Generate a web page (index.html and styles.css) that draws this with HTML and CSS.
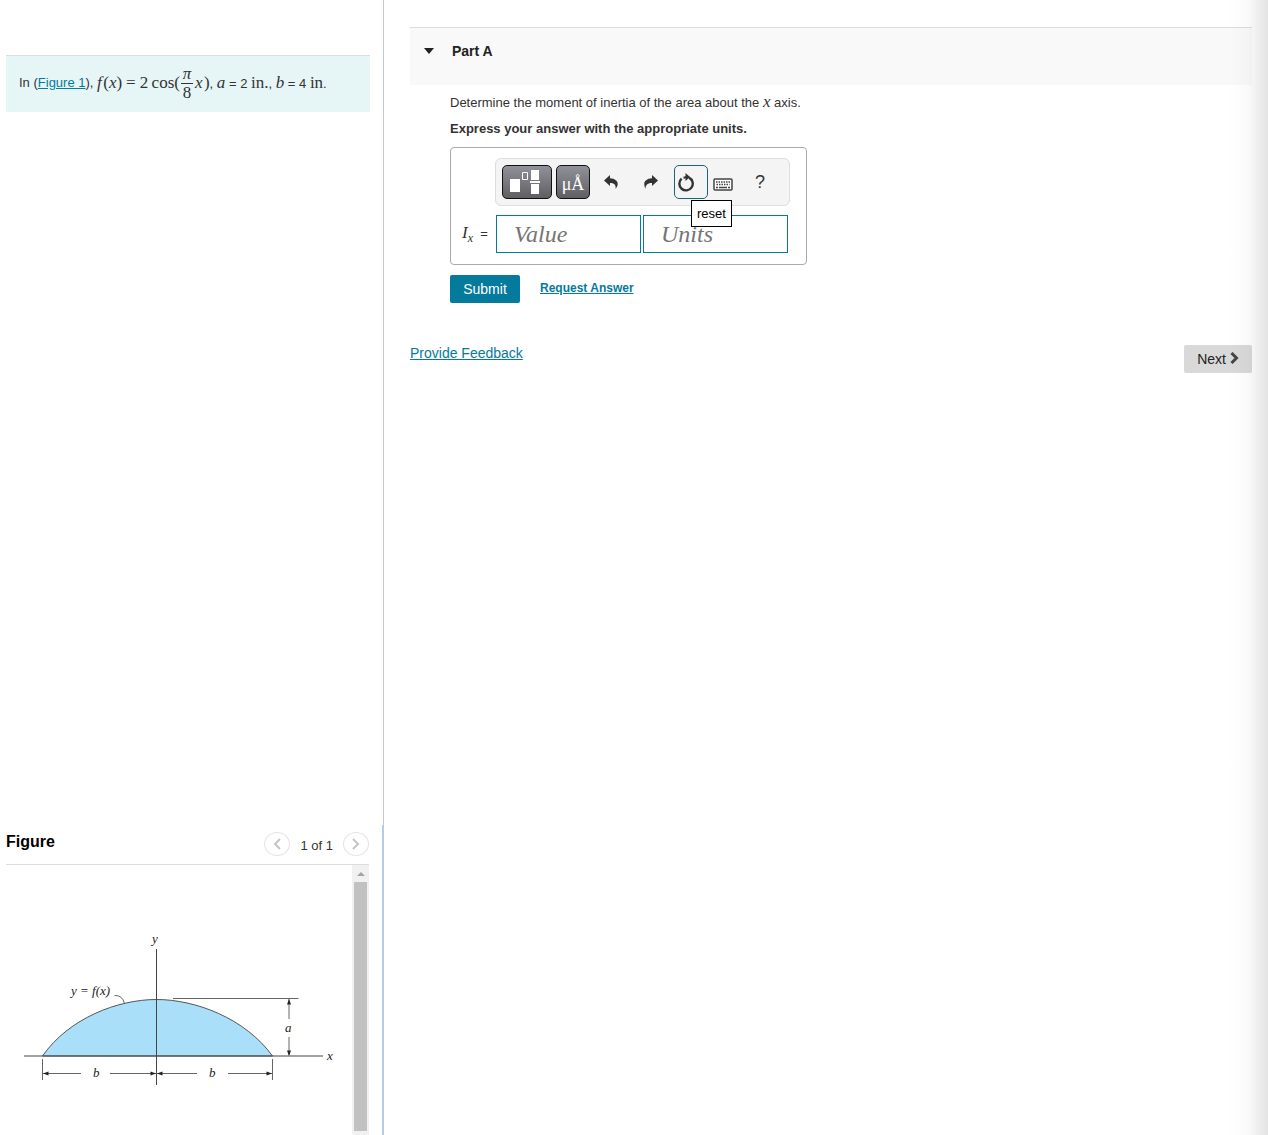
FILE: index.html
```html
<!DOCTYPE html>
<html lang="en">
<head>
    <meta charset="UTF-8">
    <meta name="viewport" content="width=device-width, initial-scale=1.0">
    <title>Part A - Moment of Inertia</title>
    <link rel="stylesheet" href="styles.css">
</head>
<body>
    <div class="page">
        <aside class="left-pane">
            <section class="problem">
                <p class="problem-text">
                    <span>In (<a href="#figure">Figure 1</a>),&nbsp;</span>
                    <span class="math"><i>f</i>&#8202;(<i>x</i>)<span class="equals">=</span>2&#8201;cos(</span>
                    <span class="fraction math"><i>π</i><span class="denominator">8</span></span>
                    <span class="math"><i>x</i>&#8202;)</span>
                    <span>,&nbsp;<i class="math">a</i> = 2 <span class="math">in.</span>, <i class="math">b</i> = 4 <span class="math">in</span>.</span>
                </p>
            </section>
            <section class="figure" id="figure">
                <div class="figure-header">
                    <h2>Figure</h2>
                    <div class="pager">
                        <button type="button" aria-label="Previous figure">
                            <svg width="8" height="12" viewBox="0 0 8 12"><path d="M7 1L2 6l5 5"/></svg>
                        </button>
                        <span>1 of 1</span>
                        <button type="button" aria-label="Next figure">
                            <svg width="8" height="12" viewBox="0 0 8 12"><path d="M1 1l5 5-5 5"/></svg>
                        </button>
                    </div>
                </div>
                <div class="figure-body">
                    <svg class="diagram" width="346" height="270" viewBox="6 865 346 270">
                        <path class="area" d="M42.5 1056C69 1018 118 999.500 156.500 999.500S245 1018 272.500 1056Z"/>
                        <path class="axis" d="M24 1056h299M156.500 949v136"/>
                        <path class="thin" d="M173 998.500h125.500M114.500 995.500q8-.5 10 8M42.500 1059v21M272.500 1059v21"/>
                        <path class="thin" d="M43 1073.500h38M110 1073.500h87M228 1073.500h44M289 999v20M289 1037v18"/>
                        <path class="arrow" d="M43 1073.500l5.500-2v4zM156 1073.500l-5.500-2v4zM157 1073.500l5.500-2v4zM272 1073.500l-5.500-2v4zM289 999l-2 5.500h4zM289 1056l-2-5.500h4z"/>
                        <text x="152" y="943">y</text>
                        <text x="71" y="995">y = f(x)</text>
                        <text x="93" y="1077">b</text>
                        <text x="209" y="1077">b</text>
                        <text x="285" y="1032">a</text>
                        <text x="327" y="1060">x</text>
                    </svg>
                    <div class="scrollbar">
                        <div class="scroll-up"></div>
                        <div class="scroll-thumb"></div>
                    </div>
                </div>
            </section>
        </aside>

        <main class="right-pane">
            <div class="part-header">
                <span class="caret"></span>
                <h1>Part A</h1>
            </div>
            <form class="part-body">
                <p>Determine the moment of inertia of the area about the <i class="math">x</i> axis.</p>
                <p class="instructions">Express your answer with the appropriate units.</p>

                <div class="answer-box">
                    <div class="toolbar">
                        <button type="button" class="dark templates" aria-label="Templates">
                            <svg width="32" height="26" viewBox="0 0 32 26">
                                <path fill="#fff" d="M1 10h10v13H1zM22 1h8v10h-8zM22 15h8v10h-8zM21 12h10v2H21z"/>
                                <path fill="none" stroke="#fff" d="M13.500 3.500h5v7h-5z"/>
                            </svg>
                        </button>
                        <button type="button" class="dark symbols">μÅ</button>
                        <button type="button" class="plain" aria-label="undo">
                            <svg width="14" height="15" viewBox="0 0 14 15"><path fill="#333" d="M0 5.500L6 0v3.200C11 3.500 14 6 13.700 9c-.1 2-1 3.500-2.200 5 .7-3.300-.5-6-5.500-6v3z"/></svg>
                        </button>
                        <button type="button" class="plain redo" aria-label="redo">
                            <svg width="14" height="15" viewBox="0 0 14 15"><path fill="#333" d="M14 5.500L8 0v3.200C3 3.500 0 6 .3 9c.1 2 .5 3.500 1.200 5C1.300 10.700 3 8 8 8v3z"/></svg>
                        </button>
                        <button type="button" class="plain reset" aria-label="reset">
                            <svg width="18" height="19" viewBox="0 0 18 19">
                                <path fill="none" stroke="#333" stroke-width="2.400" d="M12 4.700A6.700 6.700 0 1 1 4.600 5.700"/>
                                <path fill="none" stroke="#333" stroke-width="2" d="M6.500 4.700L10 4"/>
                                <path fill="#333" d="M8.500 0l4.500 4-4.500 4z"/>
                            </svg>
                            <span class="tooltip">reset</span>
                        </button>
                        <button type="button" class="plain keyboard" aria-label="keyboard shortcuts">
                            <svg width="20" height="13" viewBox="0 0 20 13">
                                <rect x="1" y="1" width="18" height="11" rx="1" fill="#fff" stroke="#444" stroke-width="1.500"/>
                                <path stroke="#444" stroke-width="1.500" stroke-dasharray="1.500 1" d="M3 4h14M3.500 6.500h13"/>
                                <path stroke="#444" stroke-width="1.500" d="M3 9.500h2M6 9.500h8M15 9.500h2"/>
                            </svg>
                        </button>
                        <button type="button" class="plain help" aria-label="help">?</button>
                    </div>
                    <div class="answer-row">
                        <label for="value"><i class="math">I<sub>x</sub></i>&nbsp; =</label>
                        <input type="text" id="value" placeholder="Value">
                        <input type="text" id="units" placeholder="Units" aria-label="Units">
                    </div>
                </div>

                <div class="actions">
                    <button type="submit" class="submit">Submit</button>
                    <a href="#answer">Request Answer</a>
                </div>
            </form>
            <div class="footer">
                <a href="#feedback">Provide Feedback</a>
                <button type="button" class="next">Next
                    <svg width="9" height="12" viewBox="0 0 9 12"><path fill="none" stroke="#444" stroke-width="3" d="M1.500 1l5 5-5 5"/></svg>
                </button>
            </div>
        </main>
    </div>
</body>
</html>
```
FILE: styles.css
```css
* {
    box-sizing: border-box;
}

body {
    margin: 0;
    font-family: "Liberation Sans", Arial, sans-serif;
    font-size: 13px;
    line-height: 16px;
    color: #333;
    background-color: #fff;
}

h1, h2, p {
    margin: 0;
}

a {
    color: #047a9c;
}

button {
    font-family: inherit;
    cursor: pointer;
}

.math {
    font-family: "Liberation Serif", "Times New Roman", serif;
    font-size: 17px;
}

.page {
    display: grid;
    grid-template-columns: 384px 1fr;
    min-height: 100vh;
}

/* left side: problem statement and figure */
.left-pane {
    display: flex;
    flex-direction: column;
}

.problem {
    flex: 1;
    padding: 55px 13px 0 6px;
    border-right: 1px solid #c1c9d5;
}

.problem-text {
    display: flex;
    align-items: center;
    height: 57px;
    padding: 0 0 2px 13px;
    background-color: #e6f5f6;
    border-top: 1px solid #ddd;
    white-space: nowrap;
}

.equals {
    margin: 0 4px;
}

.fraction {
    display: flex;
    flex-direction: column;
    align-items: center;
    width: 12px;
    margin: 0 2px 0 1px;
    line-height: 18px;
}

.denominator {
    width: 100%;
    text-align: center;
    border-top: 1px solid #333;
}

.figure {
    display: flex;
    flex-direction: column;
    height: 310px;
    padding: 0 13px 0 6px;
    border-right: 2px solid #b8cce0;
}

.figure-header {
    display: flex;
    justify-content: space-between;
    height: 40px;
    padding-top: 7px;
    border-bottom: 1px solid #ddd;
}

.figure-header h2 {
    font-size: 16px;
    line-height: 20px;
    color: #000;
}

.pager {
    display: flex;
    gap: 10px;
    line-height: 28px;
}

.pager button {
    display: flex;
    align-items: center;
    justify-content: center;
    width: 26px;
    height: 24px;
    padding: 0;
    background-color: #fff;
    border: 1px solid #e3e3e3;
    border-radius: 50%;
}

.pager path {
    fill: none;
    stroke: #c4c4c4;
    stroke-width: 2;
}

.figure-body {
    display: flex;
    flex: 1;
}

.diagram {
    flex: 1;
}

.diagram text {
    font-family: "Liberation Serif", "Times New Roman", serif;
    font-size: 13px;
    font-style: italic;
    fill: #222;
}

.area {
    fill: #aadffa;
    stroke: #555;
}

.axis {
    stroke: #444;
}

.thin {
    fill: none;
    stroke: #666;
}

.arrow {
    fill: #222;
}

.scrollbar {
    display: flex;
    flex-direction: column;
    align-items: center;
    width: 17px;
    padding-bottom: 4px;
    background-color: #f1f1f1;
}

.scroll-up {
    height: 17px;
    padding-top: 7px;
}

.scroll-up::before {
    content: "";
    display: block;
    border: 4px solid transparent;
    border-top: none;
    border-bottom-color: #a3a3a3;
}

.scroll-thumb {
    flex: 1;
    width: 13px;
    background-color: #c1c1c1;
}

/* right side: question part */
.right-pane {
    position: relative;
    padding: 27px 16px 0 26px;
}

/* shade along the window edge */
.right-pane::after {
    content: "";
    position: absolute;
    top: 0;
    right: 0;
    bottom: 0;
    width: 40px;
    background: linear-gradient(to right, rgba(0, 0, 0, 0), rgba(0, 0, 0, 0.02) 50%, rgba(0, 0, 0, 0.11));
    pointer-events: none;
}

.part-header {
    display: flex;
    gap: 18px;
    height: 58px;
    padding: 15px 14px;
    background-color: #f9f9f9;
    border-top: 1px solid #ddd;
}

.part-header h1 {
    font-size: 14px;
    line-height: 16px;
    color: #222;
}

.caret {
    height: 6px;
    margin-top: 5px;
    border: 5px solid transparent;
    border-top: 6px solid #222;
    border-bottom: none;
}

.part-body {
    padding: 9px 0 0 40px;
}

.part-body p {
    margin-bottom: 10px;
}

.instructions {
    font-weight: bold;
}

.answer-box {
    width: 357px;
    padding: 10px 16px 11px 11px;
    border: 1px solid #aaa;
    border-radius: 4px;
}

.toolbar {
    display: flex;
    align-items: center;
    gap: 4px;
    height: 48px;
    margin-left: 33px;
    padding: 0 6px;
    background-color: #f4f4f4;
    border: 1px solid #ddd;
    border-radius: 6px;
}

.toolbar button {
    display: flex;
    align-items: center;
    justify-content: center;
    width: 34px;
    height: 34px;
    padding: 0;
    border-radius: 5px;
}

.toolbar .dark {
    color: #fff;
    background: linear-gradient(#91919a, #5f5f62);
    border: 1px solid #111;
}

.toolbar .templates {
    width: 50px;
    padding-right: 4px;
}

.toolbar .symbols {
    padding-top: 4px;
    font-family: "Liberation Serif", "Times New Roman", serif;
    font-size: 18px;
}

.toolbar .plain {
    color: #333;
    background: none;
    border: none;
}

.toolbar .redo {
    width: 38px;
}

.toolbar .reset {
    position: relative;
    justify-content: flex-start;
    padding-left: 2px;
    border: 1px solid #1f6372;
}

.toolbar .keyboard {
    width: 22px;
    padding-top: 4px;
}

.toolbar .help {
    width: 44px;
    font-size: 18px;
}

.tooltip {
    position: absolute;
    top: 34px;
    left: 16px;
    padding: 5px;
    font-size: 13px;
    line-height: 15px;
    color: #000;
    background-color: #fff;
    border: 1px solid #000;
}

.answer-row {
    display: flex;
    align-items: center;
    gap: 2px;
    margin-top: 9px;
}

.answer-row label {
    width: 32px;
    padding-bottom: 2px;
    white-space: nowrap;
}

.answer-row sub {
    font-size: 12px;
    line-height: 0;
}

.answer-row input {
    width: 145px;
    height: 38px;
    padding: 0 17px;
    font-family: "Liberation Serif", "Times New Roman", serif;
    font-size: 24px;
    font-style: italic;
    border: 1px solid #047a9c;
}

.answer-row input::placeholder {
    color: #757575;
}

.actions {
    display: flex;
    gap: 20px;
    margin-top: 10px;
}

.actions a {
    font-size: 12px;
    font-weight: bold;
    line-height: 26px;
}

.submit {
    width: 70px;
    height: 28px;
    padding: 0;
    font-size: 14px;
    color: #fff;
    background-color: #047a9c;
    border: none;
    border-radius: 2px;
}

.footer {
    display: flex;
    justify-content: space-between;
    margin-top: 42px;
    font-size: 14px;
}

.next {
    width: 68px;
    height: 28px;
    padding: 0;
    font-size: 14px;
    color: #222;
    background-color: #d9d9d9;
    border: none;
    border-radius: 2px;
}
```
